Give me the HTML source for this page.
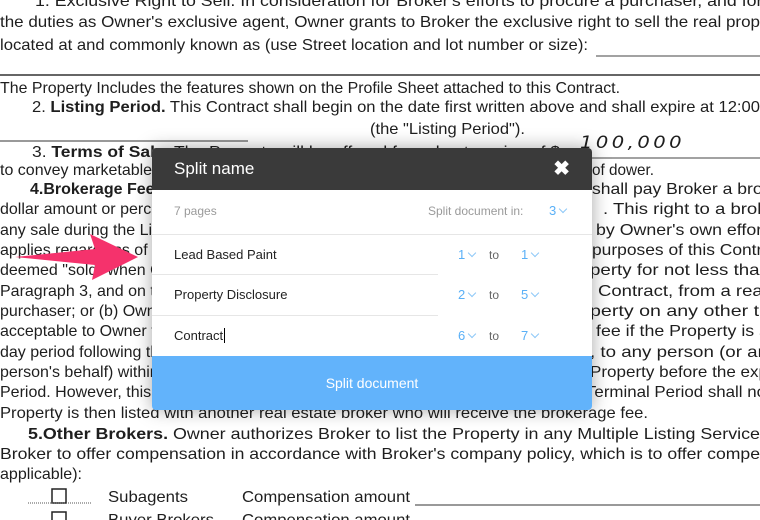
<!DOCTYPE html>
<html><head><meta charset="utf-8"><style>
html,body{margin:0;padding:0;width:760px;height:520px;overflow:hidden;background:#fff}
svg.doc{position:absolute;left:0;top:0}
.doc text{font-family:"Liberation Sans",sans-serif;font-size:16px;fill:#1e1e1e}
.dlg{position:absolute;left:152px;top:148px;width:440px;height:262px;background:#fff;border-radius:4px;overflow:hidden;box-shadow:0 0 18px rgba(0,0,0,.35);font-family:"Liberation Sans",sans-serif}
.hd{height:42px;background:#3a3a3a;color:#fff;font-size:17px;line-height:42px;padding-left:22px;position:relative}
.x{position:absolute;right:22px;top:0;font-size:20px;font-weight:bold}
.top{height:44px;border-bottom:1px solid #e6e6e6;position:relative;font-size:12px;color:#9a9a9a}
.row{position:absolute;left:0;width:440px;height:40px}
.lbl{position:absolute;left:22px;top:0;line-height:40px;font-size:13px;color:#222}
.ln{position:absolute;left:0;width:286px;height:1px;background:#e6e6e6}
.n{position:absolute;color:#5ab0f7;font-size:13px}
.to{position:absolute;color:#666;font-size:12px}
.chev{display:inline-block;width:5px;height:5px;border-right:1.3px solid #8cc7f7;border-bottom:1.3px solid #8cc7f7;transform:rotate(45deg);margin-left:4px;position:relative;top:-3px}
.btn{position:absolute;left:0;top:208px;width:440px;height:54px;background:#62b3fb;color:#fff;text-align:center;line-height:54px;font-size:14px}
</style></head><body>
<svg class="doc" width="760" height="520" viewBox="0 0 760 520">
<text x="35" y="6" textLength="760" lengthAdjust="spacingAndGlyphs">1. Exclusive Right to Sell. In consideration for Broker's efforts to procure a purchaser, and for Bro</text>
<text x="0" y="27" textLength="760" lengthAdjust="spacingAndGlyphs">the duties as Owner's exclusive agent, Owner grants to Broker the exclusive right to sell the real prop</text>
<text x="0" y="50" textLength="588" lengthAdjust="spacingAndGlyphs">located at and commonly known as (use Street location and lot number or size):</text>
<line x1="596" y1="56" x2="760" y2="56" stroke="#444" stroke-width="1"/>
<line x1="0" y1="75" x2="760" y2="75" stroke="#333" stroke-width="1.6"/>
<text x="0" y="93" textLength="620" lengthAdjust="spacingAndGlyphs">The Property Includes the features shown on the Profile Sheet attached to this Contract.</text>
<text x="32" y="112" textLength="728" lengthAdjust="spacingAndGlyphs">2. <tspan font-weight="bold">Listing Period.</tspan> This Contract shall begin on the date first written above and shall expire at 12:00</text>
<text x="370" y="134" textLength="155" lengthAdjust="spacingAndGlyphs">(the "Listing Period").</text>
<line x1="0" y1="141" x2="248" y2="141" stroke="#333" stroke-width="1"/>
<text x="32" y="157" textLength="528" lengthAdjust="spacingAndGlyphs">3. <tspan font-weight="bold">Terms of Sale.</tspan> The Property will be offered for sale at a price of $</text>
<text x="580" y="148" style="font-family:'DejaVu Sans',sans-serif;font-style:italic;font-size:17px;letter-spacing:3px" textLength="105" lengthAdjust="spacingAndGlyphs">100,000</text>
<line x1="560" y1="158" x2="760" y2="158" stroke="#444" stroke-width="1"/>
<text x="0" y="175">to convey marketable title by deed</text>
<text x="592" y="175" textLength="62" lengthAdjust="spacingAndGlyphs">of dower.</text>
<text x="30" y="194"><tspan font-weight="bold">4.Brokerage Fee.</tspan> Owner</text>
<text x="592" y="194" textLength="195" lengthAdjust="spacingAndGlyphs">shall pay Broker a broker</text>
<text x="0" y="214">dollar amount or percentage of</text>
<text x="603" y="214" textLength="180" lengthAdjust="spacingAndGlyphs">. This right to a broker</text>
<text x="0" y="235">any sale during the Listing</text>
<text x="596" y="235" textLength="180" lengthAdjust="spacingAndGlyphs">by Owner's own efforts</text>
<text x="0" y="255">applies regardless of who</text>
<text x="592" y="255" textLength="180" lengthAdjust="spacingAndGlyphs">purposes of this Contra</text>
<text x="0" y="275">deemed "sold" when Owner</text>
<text x="590" y="275" textLength="180" lengthAdjust="spacingAndGlyphs">perty for not less than</text>
<text x="0" y="296">Paragraph 3, and on the</text>
<text x="598" y="296" textLength="175" lengthAdjust="spacingAndGlyphs">Contract, from a read</text>
<text x="0" y="316">purchaser; or (b) Owner</text>
<text x="590" y="316" textLength="180" lengthAdjust="spacingAndGlyphs">perty on any other te</text>
<text x="0" y="336">acceptable to Owner for</text>
<text x="596" y="336" textLength="172" lengthAdjust="spacingAndGlyphs">fee if the Property is s</text>
<text x="0" y="357">day period following the</text>
<text x="590" y="357" textLength="178" lengthAdjust="spacingAndGlyphs">, to any person (or an</text>
<text x="0" y="377">person's behalf) within the</text>
<text x="590" y="377" textLength="178" lengthAdjust="spacingAndGlyphs">Property before the exp</text>
<text x="0" y="397">Period. However, this fee</text>
<text x="586" y="397" textLength="180" lengthAdjust="spacingAndGlyphs">Terminal Period shall no</text>
<text x="0" y="418" textLength="648" lengthAdjust="spacingAndGlyphs">Property is then listed with another real estate broker who will receive the brokerage fee.</text>
<text x="28" y="439" textLength="732" lengthAdjust="spacingAndGlyphs"><tspan font-weight="bold">5.Other Brokers.</tspan> Owner authorizes Broker to list the Property in any Multiple Listing Service</text>
<text x="0" y="459" textLength="760" lengthAdjust="spacingAndGlyphs">Broker to offer compensation in accordance with Broker's company policy, which is to offer compe</text>
<text x="0" y="479" textLength="82" lengthAdjust="spacingAndGlyphs">applicable):</text>
<rect x="52" y="489" width="14" height="14" fill="none" stroke="#222" stroke-width="1.5"/>
<line x1="28" y1="503" x2="92" y2="503" stroke="#555" stroke-dasharray="1 1"/>
<text x="108" y="502" textLength="80" lengthAdjust="spacingAndGlyphs">Subagents</text>
<text x="242" y="502" textLength="168" lengthAdjust="spacingAndGlyphs">Compensation amount</text>
<line x1="415" y1="505" x2="760" y2="505" stroke="#333" stroke-width="1"/>
<rect x="52" y="512" width="14" height="14" fill="none" stroke="#222" stroke-width="1.5"/>
<text x="108" y="525" textLength="106" lengthAdjust="spacingAndGlyphs">Buyer Brokers</text>
<text x="242" y="525" textLength="168" lengthAdjust="spacingAndGlyphs">Compensation amount</text>
<path d="M15,257 L95,249 L90,234 L138,257 L92,280 L95,265 Z" fill="#f5326c"/>
</svg>
<div class="dlg">
  <div class="hd">Split name<span class="x">✖</span></div>
  <div class="top">
    <span style="position:absolute;left:22px;top:14px">7 pages</span>
    <span style="position:absolute;left:276px;top:14px">Split document in:</span>
    <span class="n" style="left:397px;top:13px">3<i class="chev"></i></span>
  </div>
  <div class="row" style="top:87px"><span class="lbl">Lead Based Paint</span>
    <span class="n" style="left:306px;top:12px">1<i class="chev"></i></span><span class="to" style="left:337px;top:13px">to</span><span class="n" style="left:369px;top:12px">1<i class="chev"></i></span></div>
  <div class="ln" style="top:126px"></div>
  <div class="row" style="top:127px"><span class="lbl">Property Disclosure</span>
    <span class="n" style="left:306px;top:12px">2<i class="chev"></i></span><span class="to" style="left:337px;top:13px">to</span><span class="n" style="left:369px;top:12px">5<i class="chev"></i></span></div>
  <div class="ln" style="top:167px"></div>
  <div class="row" style="top:168px"><span class="lbl">Contract<span style="border-left:1px solid #000;margin-left:1px"></span></span>
    <span class="n" style="left:306px;top:12px">6<i class="chev"></i></span><span class="to" style="left:337px;top:13px">to</span><span class="n" style="left:369px;top:12px">7<i class="chev"></i></span></div>
  <div class="btn">Split document</div>
</div>
</body></html>
